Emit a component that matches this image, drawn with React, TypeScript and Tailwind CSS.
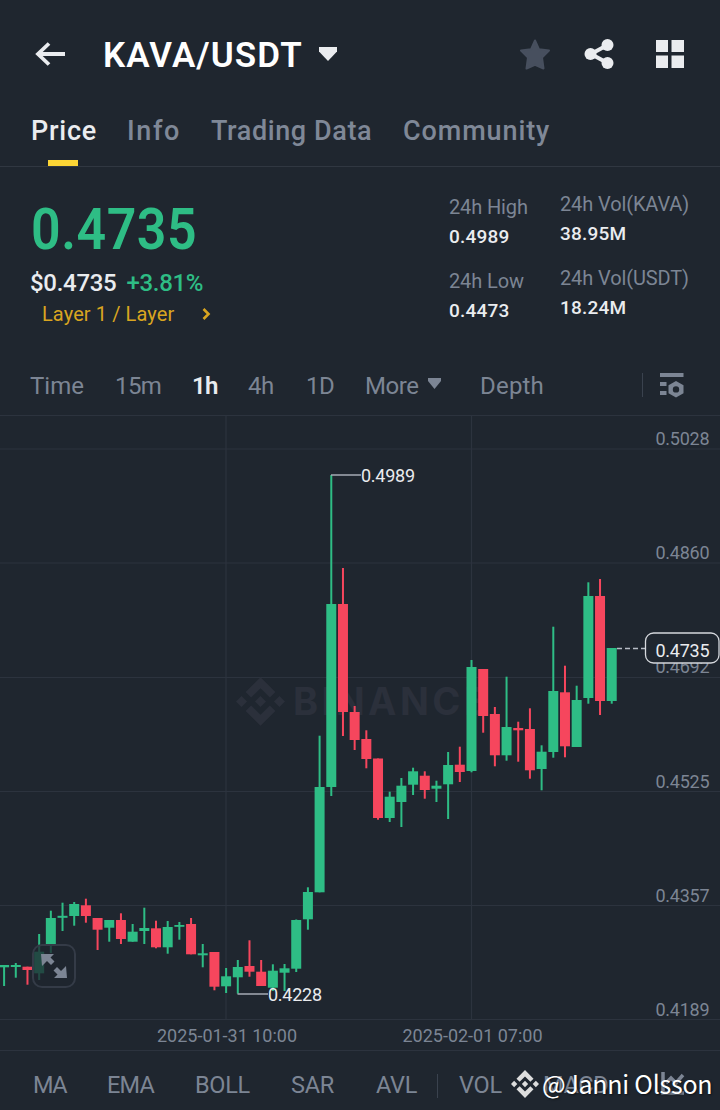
import React from "react";

const FONT = "Roboto, 'Noto Sans', sans-serif";

// [rising, wick top, body top, body bottom, wick bottom]
type Candle = [number, number, number, number, number];

const candles: Candle[] = [
  [1, 965, 965, 967.3, 986],
  [1, 963, 965, 967, 977.7],
  [0, 966.7, 966.7, 970, 984.7],
  [1, 934, 951.7, 973.3, 980],
  [1, 910.7, 918, 944, 953],
  [1, 902.7, 915.8, 917.8, 931],
  [1, 902, 904, 916, 925.7],
  [0, 898.7, 905.3, 916, 922.7],
  [0, 918, 918, 929.7, 950],
  [1, 920, 920, 927.7, 941.7],
  [0, 913.3, 920, 939, 944],
  [1, 924, 931.7, 941.7, 941.7],
  [1, 907.7, 928, 931, 944],
  [0, 920.7, 928.3, 947.3, 948.3],
  [1, 921, 927, 947.3, 953.7],
  [1, 922, 925, 926.8, 939.7],
  [0, 918, 924, 954.3, 954.3],
  [1, 944, 953.3, 955.3, 967.3],
  [0, 952, 952, 986.7, 990.3],
  [1, 968, 976.3, 986.3, 993],
  [1, 960, 967, 977.3, 993.7],
  [0, 940.3, 966, 971.7, 976.7],
  [0, 960, 971.7, 986, 986],
  [1, 964.3, 970.7, 987.7, 991],
  [1, 964, 968.3, 972.7, 991],
  [1, 919.5, 920, 968.7, 972],
  [1, 887.3, 892, 919.3, 929.7],
  [1, 735.7, 787, 892.3, 892.3],
  [1, 475, 604, 787, 796],
  [0, 568, 604, 712, 736],
  [0, 706, 712, 740, 750],
  [0, 730.3, 739, 759, 768.3],
  [0, 758.5, 758.5, 818, 819.7],
  [1, 791.7, 796.7, 818, 822],
  [1, 778, 785.7, 802, 827],
  [1, 767.7, 771.3, 784.7, 795],
  [0, 771.3, 775.7, 790, 798.7],
  [1, 780.7, 785.7, 788.7, 802],
  [1, 752, 765, 784.3, 819],
  [0, 746.7, 764.7, 772, 782],
  [1, 660, 667, 771, 772.3],
  [0, 669, 669, 716, 732.7],
  [0, 707, 714, 755.3, 766.3],
  [1, 676.7, 727, 755.3, 760.7],
  [0, 721.7, 728, 730.3, 761.7],
  [0, 708.3, 729, 770.3, 778.7],
  [1, 745.3, 751.7, 769, 790.3],
  [1, 626.7, 691, 752, 757.7],
  [0, 665.7, 692.3, 746.3, 757.3],
  [1, 685.7, 700, 747, 747],
  [1, 582.3, 596, 698, 703.7],
  [0, 579, 596, 701, 715],
  [1, 648, 648, 701, 703.7],
];

const priceTicks: [string, number][] = [
  ["0.5028", 445],
  ["0.4860", 559],
  ["0.4692", 673],
  ["0.4525", 788],
  ["0.4357", 902],
  ["0.4189", 1016],
];

const gridRows = [449, 563, 677.5, 791.5, 905.5, 1019.5];

function BinanceMark({ className }: { className: string }) {
  return (
    <svg viewBox="0 0 24 24" className={className} fill="currentColor">
      <path d="M7.4 10.1 12 5.5l4.6 4.6 2.7-2.7L12 .1 4.7 7.4zM0 12l2.7-2.7L5.4 12l-2.7 2.7zM7.4 13.9l4.6 4.6 4.6-4.6 2.7 2.7-7.3 7.3-7.3-7.3zM18.6 12l2.7-2.7L24 12l-2.7 2.7zM14.7 12 12 9.3 9.3 12l2.7 2.7z" />
    </svg>
  );
}

function Header() {
  return (
    <header className="flex h-[108px] items-center pl-[35px] pr-[36px]">
      <svg width="30" height="24" viewBox="0 0 30 24" fill="none" stroke="#eaecef" strokeWidth="3.8">
        <path d="M30 12H3M14 1.5 3 12l11 10.5" />
      </svg>
      <h1 className="ml-[38px] w-[199px] whitespace-nowrap pt-[3px] text-[35px] font-semibold leading-none tracking-[1.1px] text-white">
        KAVA/USDT
      </h1>
      <svg width="18" height="14" viewBox="0 0 18 14" className="ml-[17px]" fill="#eaecef">
        <path d="M0 0h18v4.5L9 14 0 4.5z" />
      </svg>
      <div className="ml-auto flex items-center">
        <svg width="30" height="31" viewBox="0 0 30 31" fill="#474f5e" stroke="#474f5e" strokeWidth="2" strokeLinejoin="round">
          <path d="m15 1.500 4 8.800 10 1.200-7 7L23.500 29.500 15 25.800l-8.500 3.700L8 18.500l-7-7 10-1.200z" />
        </svg>
        <svg width="30" height="32" viewBox="0 0 30 32" className="ml-[34px]" fill="#eaecef" stroke="#eaecef">
          <path d="M23.500 7 7 16l16.500 9" fill="none" strokeWidth="4" />
          <circle cx="6.500" cy="16" r="6" stroke="none" />
          <circle cx="23.500" cy="7" r="6" stroke="none" />
          <circle cx="23.500" cy="25" r="6" stroke="none" />
        </svg>
        <svg width="28" height="28" viewBox="0 0 28 28" className="ml-[42px]" fill="#eaecef">
          <path d="M0 0h12v12H0zM15.500 0H28v12H15.500zM0 15.500h12V28H0zM15.500 15.500H28V28H15.500z" />
        </svg>
      </div>
    </header>
  );
}

function Tabs() {
  return (
    <nav className="flex h-[59px] items-start whitespace-nowrap border-b border-[#303741] pl-[31px] text-[27px] font-medium leading-[46px] tracking-[0.75px] text-[#7f8897]">
      <div className="flex h-[58px] w-[96px] flex-col">
        <span className="text-[#eaecef]">Price</span>
        <span className="ml-[17px] mt-[6px] h-[6px] w-[30px] bg-[#fcd535]" />
      </div>
      <span className="w-[84px] tracking-[1.6px]">Info</span>
      <span className="w-[192px] tracking-[0.6px]">Trading Data</span>
      <span className="tracking-[0.9px]">Community</span>
    </nav>
  );
}

function Stat({ label, value }: { label: string; value: string }) {
  return (
    <div className="h-[74px] whitespace-nowrap">
      <div className="text-[20px] leading-[29px] tracking-[-0.12px] text-[#7c8594]">{label}</div>
      <div className="text-[19px] font-medium leading-[29px] tracking-[0.2px] text-[#eaecef]">{value}</div>
    </div>
  );
}

function Summary() {
  return (
    <section className="flex h-[188px] pl-[31px]">
      <div className="w-[418px] whitespace-nowrap">
        <div className="mt-[33px] origin-left scale-x-[0.91] text-[57px] font-semibold leading-[60px] tracking-[0.6px] text-[#2ebd85]">
          0.4735
        </div>
        <div className="-ml-px mt-[7px] flex gap-[10px] text-[24px] font-medium leading-[32px] tracking-[-0.3px]">
          <span className="text-[#eaecef]">$0.4735</span>
          <span className="text-[#2ebd85]">+3.81%</span>
        </div>
        <div className="ml-[11px] flex items-center text-[20px] leading-[30px] tracking-[0.1px] text-[#d9a520]">
          <span className="w-[160px]">Layer 1 / Layer</span>
          <svg width="9" height="12" viewBox="0 0 9 12" fill="none" stroke="currentColor" strokeWidth="2.600">
            <path d="m1.500 1 5 5-5 5" />
          </svg>
        </div>
      </div>
      <div className="w-[111px] pt-[26px]">
        <Stat label="24h High" value="0.4989" />
        <Stat label="24h Low" value="0.4473" />
      </div>
      <div className="pt-[23px]">
        <Stat label="24h Vol(KAVA)" value="38.95M" />
        <Stat label="24h Vol(USDT)" value="18.24M" />
      </div>
    </section>
  );
}

function Intervals() {
  return (
    <div className="flex h-[60px] items-center whitespace-nowrap pl-[30px] text-[24px] text-[#7c8594]">
      <span className="w-[85px] pt-[2px]">Time</span>
      <span className="w-[77px] pt-[2px] tracking-[-0.6px]">15m</span>
      <span className="w-[56px] pt-[2px] font-semibold tracking-[-0.6px] text-[#eaecef]">1h</span>
      <span className="w-[58px] pt-[2px] tracking-[-0.4px]">4h</span>
      <span className="w-[59px] pt-[2px] tracking-[-0.4px]">1D</span>
      <span className="w-[63px] pt-[2px] tracking-[-0.4px]">More</span>
      <svg width="13" height="11" viewBox="0 0 13 11" className="-mt-[3px]" fill="currentColor">
        <path d="M0 0h13v3L6.500 11 0 3z" />
      </svg>
      <span className="ml-[39px] w-[162px] pt-[2px] tracking-[0.2px]">Depth</span>
      <span className="h-[24px] w-px bg-[#3a424e]" />
      <svg width="24" height="25" viewBox="0 0 24 25" className="ml-[17px]" fill="currentColor">
        <path d="M0 0h23.500v4H0zM0 9h6.500v4H0zM0 18h6.500v4H0z" />
        <path fillRule="evenodd" d="m16 8 7.500 4.200v8L16 24.500l-7.500-4.300v-8zM16 13.200a3.200 3.200 0 1 0 0 6.400 3.200 3.200 0 0 0 0-6.400z" />
      </svg>
    </div>
  );
}

function Chart() {
  return (
    <div className="relative h-[636px]">
      <svg width="720" height="636" viewBox="0 415 720 636" className="block" fontFamily={FONT}>
        <g stroke="#2c333e" strokeWidth="1.200">
          <path d="M0 415.500H720M0 1050.500H720M226 416V1019.500M471.500 416V1019.500" />
          {gridRows.map((y) => (
            <line key={y} x1="0" x2="720" y1={y} y2={y} />
          ))}
        </g>
        <g fill="#2b303b">
          <svg x="236" y="677" width="49" height="49" viewBox="0 0 24 24">
            <path d="M7.400 10.100 12 5.500l4.600 4.600 2.700-2.700L12 .1 4.700 7.400zM0 12l2.700-2.700L5.400 12l-2.700 2.700zM7.400 13.900l4.600 4.600 4.600-4.600 2.700 2.700-7.300 7.300-7.300-7.300zM18.600 12l2.700-2.700L24 12l-2.700 2.700zM14.700 12 12 9.300 9.300 12l2.700 2.700z" />
          </svg>
          <text x="293" y="715" fontSize="38" fontWeight="700" fontFamily="Inter, sans-serif" textLength="194">
            BINANCE
          </text>
        </g>
        {candles.map(([up, high, top, bottom, low], i) => {
          const x = 4.1 + i * 11.685;
          return (
            <g key={i} fill={up ? "#2ebd85" : "#f6465d"}>
              <rect x={x - 1} y={high} width="2" height={low - high} />
              <rect x={x - 5} y={top} width="10" height={bottom - top} />
            </g>
          );
        })}
        <path d="M331 475H361M237.500 994H268" stroke="#a5abb5" strokeWidth="1.500" />
        <path d="M617 648.500H646" stroke="#b7bdc6" strokeWidth="1.300" strokeDasharray="5 3" />
        <g fill="#eaecef" fontSize="18">
          <text x="361" y="482" textLength="54">0.4989</text>
          <text x="268" y="1001" textLength="54">0.4228</text>
        </g>
        <g fill="#7c8594" fontSize="18">
          {priceTicks.map(([label, y]) => (
            <text key={label} x="655.500" y={y} textLength="54">
              {label}
            </text>
          ))}
          <text x="157" y="1042" textLength="140">2025-01-31 10:00</text>
          <text x="402.500" y="1042" textLength="140">2025-02-01 07:00</text>
        </g>
        <rect x="645.500" y="633" width="73.500" height="30" rx="8" fill="#1f262f" stroke="#d5d8dd" strokeWidth="1.300" />
        <text x="655.500" y="657" fontSize="18" fill="#eaecef" textLength="54">0.4735</text>
      </svg>
      <button className="absolute left-[32px] top-[529px] flex h-[44px] w-[44px] items-center justify-center rounded-[10px] border-2 border-[#343b47] bg-[#1f262f]/75 text-[#7c8594]">
        <svg width="26" height="26" viewBox="0 0 26 26" fill="currentColor">
          <path d="M0 1h13L9.500 4.500l4 4-3.500 3.500-4-4L1 13zM26 25H13l3.500-3.500-4-4 3.500-3.500 4 4 5-5z" />
        </svg>
      </button>
    </div>
  );
}

function Indicators() {
  return (
    <div className="relative flex h-[59px] items-center whitespace-nowrap pl-[33px] pt-[11px] text-[23.5px] tracking-[-0.3px] text-[#7c8594]">
      <span className="w-[74px] tracking-[-1.5px]">MA</span>
      <span className="w-[88px] tracking-[-0.8px]">EMA</span>
      <span className="w-[96px]">BOLL</span>
      <span className="w-[85px]">SAR</span>
      <span className="w-[61px]">AVL</span>
      <span className="h-[24px] w-px bg-[#3a424e]" />
      <span className="ml-[21px] w-[84px]">VOL</span>
      <span className="w-[118px]">MACD</span>
      <svg width="24" height="24" viewBox="0 0 24 24" className="-mt-[4px]" fill="none" stroke="currentColor" strokeWidth="3.500">
        <path d="M2 0v21h21M5 11l5-5 5 5 7-8" />
      </svg>
      <div className="absolute left-[511px] top-[19px] flex items-center tracking-normal text-white">
        <BinanceMark className="h-[28px] w-[28px] text-[#dddddd]" />
        <span className="-mt-[2px] ml-[3px] font-['Noto_Sans_CJK_SC',sans-serif] text-[25px] leading-[30px] tracking-[-0.25px] [text-shadow:1px_1px_2px_#0008]">
          @Janni Olsson
        </span>
      </div>
    </div>
  );
}

export default function App() {
  return (
    <main className="h-[1110px] w-[720px] overflow-hidden bg-[#1f262f] font-[Roboto,'Noto_Sans',sans-serif]">
      <Header />
      <Tabs />
      <Summary />
      <Intervals />
      <Chart />
      <Indicators />
    </main>
  );
}
